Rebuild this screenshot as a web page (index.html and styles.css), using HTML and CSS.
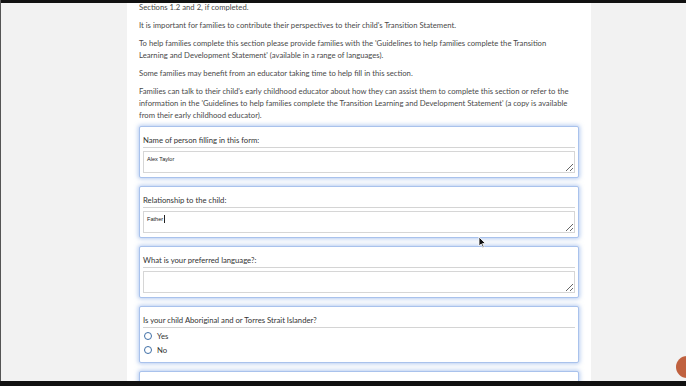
FILE: index.html
```html
<!DOCTYPE html>
<html lang="en">
<head>
  <meta charset="UTF-8" />
  <meta name="viewport" content="width=device-width, initial-scale=1.0"/>
  <title>Transition Statement - Family</title>
  <link rel="stylesheet" href="styles.css">
</head>
<body>
  <div class="topbar"></div>

  <div class="page">
    <div class="intro">
      <p>Sections 1.2 and 2, if completed.</p>
      <p>It is important for families to contribute their perspectives to their child's Transition Statement.</p>
      <p>To help families complete this section please provide families with the 'Guidelines to help families complete the Transition<br>Learning and Development Statement' (available in a range of languages).</p>
      <p>Some families may benefit from an educator taking time to help fill in this section.</p>
      <p>Families can talk to their child's early childhood educator about how they can assist them to complete this section or refer to the information in the 'Guidelines to help families complete the Transition Learning and Development Statement' (a copy is available from their early childhood educator).</p>
    </div>

    <div class="field">
      <label for="nombre">Name of person filling in this form:</label>
      <textarea id="nombre">Alex Taylor</textarea>
    </div>

    <div class="field">
      <label for="relacion">Relationship to the child:</label>
      <div class="typed">
        <textarea id="relacion">Father</textarea>
        <span class="caret"></span>
      </div>
    </div>

    <div class="field">
      <label for="idioma">What is your preferred language?:</label>
      <textarea id="idioma"></textarea>
    </div>

    <div class="field">
      <label>Is your child Aboriginal and or Torres Strait Islander?</label>
      <div class="option"><span class="radio"></span>Yes</div>
      <div class="option"><span class="radio"></span>No</div>
    </div>

    <div class="field">
      <label>Does your child have any disability, or a learning difficulty, that the school should know about? If yes, please list it below.</label>
    </div>
  </div>

  <svg class="cursor" width="8" height="12" viewBox="0 0 8 12">
    <path d="M1 1 L1 10 L3.2 8 L4.8 11.4 L6 10.8 L4.5 7.6 L7.4 7.4 Z" fill="#111" stroke="#fff" stroke-width="0.8"/>
  </svg>
  <div class="blob"></div>
  <div class="bottombar"></div>
</body>
</html>
```

FILE: styles.css
```css
html, body {
  height: 100%;
}

body {
  margin: 0;
  background-color: #f2f2f2;
  font-family: "Lato", "Open Sans", Arial, sans-serif;
  color: #4a4a4a;
  overflow: hidden;
  border-left: 1px solid #555;
}

.topbar {
  height: 3px;
  background-color: #111;
  position: relative;
  z-index: 2;
}

.page {
  margin-left: 126px;
  width: 464px;
  min-height: 100%;
  background-color: #fff;
  padding: 0 12px;
  box-sizing: border-box;
  margin-top: -2px;
}

.intro p {
  font-size: 7.7px;
  line-height: 12px;
  margin: 0 0 6px 0;
}

.intro p:last-child {
  margin-bottom: 5px;
}

.field {
  border: 1px solid #a9c2ec;
  border-radius: 2px;
  box-shadow: 0 0 4px 1px rgba(120, 160, 225, 0.55);
  padding: 7px 3px 4px 3px;
  margin-bottom: 8px;
  background-color: #fff;
}

.field label {
  display: block;
  font-size: 7.7px;
  line-height: 12px;
  padding-bottom: 1px;
  border-bottom: 1px solid #d4d4d4;
  margin-bottom: 3px;
  color: #333;
}

.field textarea {
  display: block;
  width: 100%;
  height: 22px;
  box-sizing: border-box;
  border: 1px solid #d6d6d6;
  font-family: "Liberation Sans", Arial, sans-serif;
  font-size: 5.6px;
  padding: 4px 3px;
  resize: vertical;
  color: #222;
}

.typed {
  position: relative;
}

.caret {
  position: absolute;
  left: 21px;
  top: 4px;
  width: 1px;
  height: 8px;
  background-color: #222;
}

.option {
  display: flex;
  align-items: center;
  font-size: 7.7px;
  line-height: 14px;
  color: #333;
}

.radio {
  width: 6px;
  height: 6px;
  border: 1.3px solid #3f6fa6;
  border-radius: 50%;
  margin: 0 5px 0 1px;
}

.field .option:last-child {
  margin-bottom: 1px;
}

.field label + .option {
  margin-top: -2px;
}

.cursor {
  position: fixed;
  left: 478px;
  top: 236px;
}

.blob {
  position: fixed;
  right: -12px;
  bottom: 8px;
  width: 22px;
  height: 22px;
  border-radius: 50%;
  background-color: #c0613f;
}

.bottombar {
  position: fixed;
  left: 0;
  right: 0;
  bottom: 0;
  height: 5px;
  background-color: #111;
}
```
